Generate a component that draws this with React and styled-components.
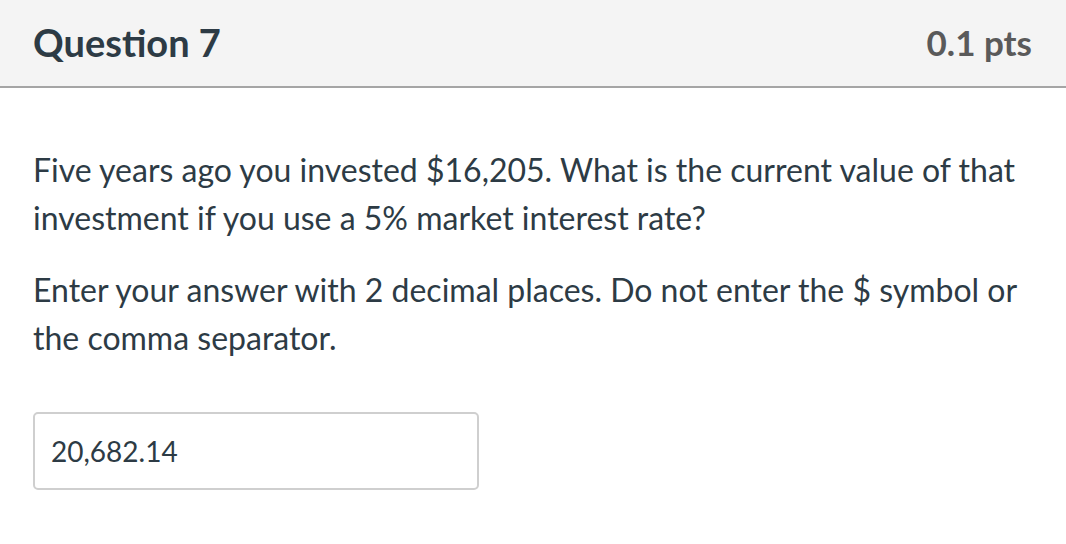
import React from 'react';
import styled, { createGlobalStyle } from 'styled-components';

const Global = createGlobalStyle`
    html, body {
        margin: 0;
        padding: 0;
        background: #fff;
    }
    body {
        font-family: Lato, "Open Sans", "Liberation Sans", sans-serif;
        color: #2d3b45;
    }
`;

const QuestionBlock = styled.section`
    width: 1066px;
`;

const Header = styled.header`
    height: 86px;
    background: #f4f4f4;
    border-bottom: 2px solid #a5a5a5;
    display: flex;
    align-items: center;
    justify-content: space-between;
    padding: 0 34px 0 33px;
    box-sizing: content-box;

    h2{
        margin: 0 0 3px;
        font-size: 38px;
        font-weight: 700;
        color: #2d3b45;
    }

    span{
        font-size: 35px;
        font-weight: 700;
        color: #5a5a5a;
        margin-bottom: 3px;
    }
`;

const Body = styled.div`
    padding: 58px 33px 0;

    p{
        margin: 0 0 24px;
        font-size: 32px;
        line-height: 48px;
    }
`;

const AnswerInput = styled.input`
    margin-top: 26px;
    width: 446px;
    height: 78px;
    box-sizing: border-box;
    border: 2px solid #cfcfcf;
    border-radius: 5px;
    padding: 0 16px;
    font-family: inherit;
    font-size: 28px;
    color: #2d3b45;
    background: #fff;
    outline: none;
`;

const App = ()=>{
    return(
        <>
            <Global/>
            <QuestionBlock>
                <Header>
                    <h2>Question 7</h2>
                    <span>0.1 pts</span>
                </Header>
                <Body>
                    <p>Five years ago you invested $16,205. What is the current value of that investment if you use a 5% market interest rate?</p>
                    <p>Enter your answer with 2 decimal places. Do not enter the $ symbol or the comma separator.</p>
                    <AnswerInput defaultValue="20,682.14" readOnly/>
                </Body>
            </QuestionBlock>
        </>
    );
}

export default App;
